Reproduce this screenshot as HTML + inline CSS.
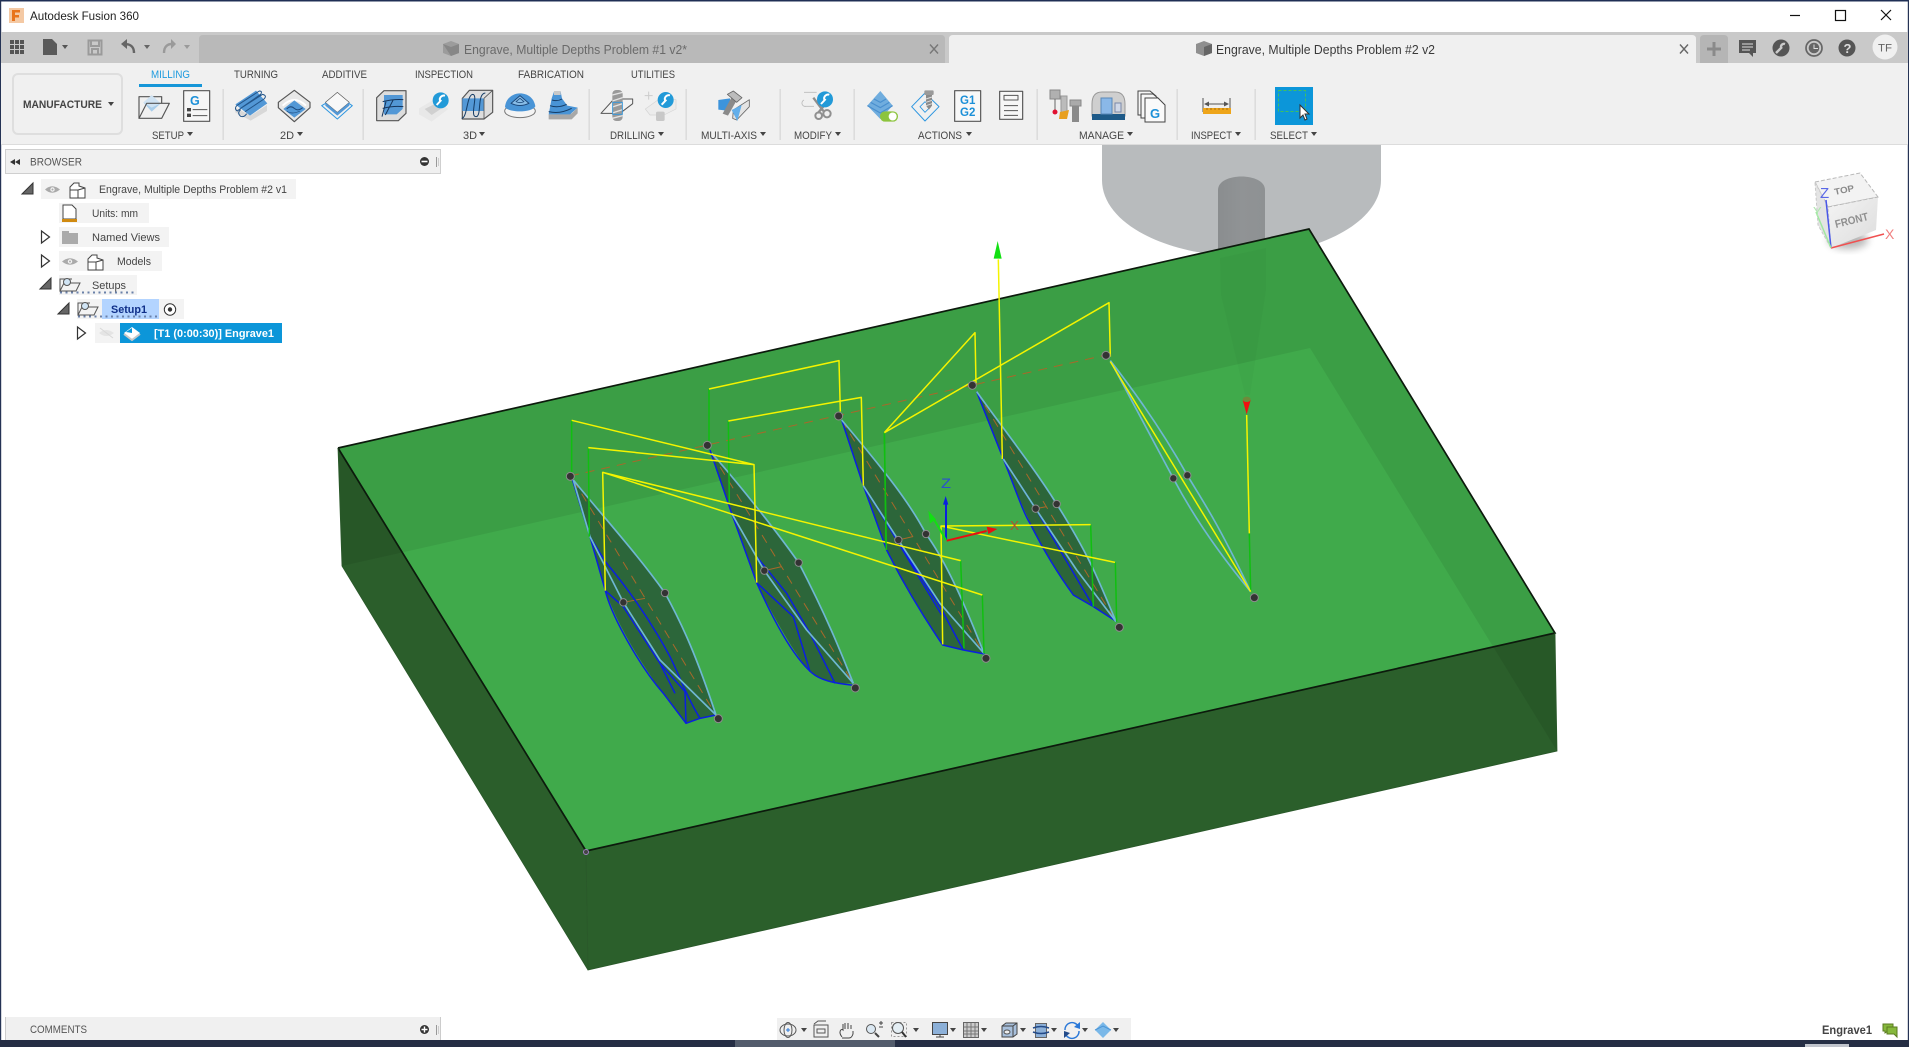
<!DOCTYPE html>
<html><head><meta charset="utf-8"><title>Autodesk Fusion 360</title>
<style>html,body{margin:0;padding:0;background:#fff;overflow:hidden;width:1909px;height:1047px}svg{display:block}text{font-family:"Liberation Sans",sans-serif}</style></head>
<body>
<svg xmlns="http://www.w3.org/2000/svg" width="1909" height="1047" viewBox="0 0 1909 1047">
<defs>
<linearGradient id="sh" x1="0" x2="1" y1="0" y2="0"><stop offset="0" stop-color="#8a8d8f"/><stop offset=".5" stop-color="#909395"/><stop offset="1" stop-color="#8e9193"/></linearGradient>
<linearGradient id="cub" x1="0" x2="1" y1="0" y2="1"><stop offset="0" stop-color="#f4f4f4"/><stop offset="1" stop-color="#dcdcdc"/></linearGradient>
<filter id="bl" x="-30%" y="-30%" width="160%" height="160%"><feGaussianBlur stdDeviation="4"/></filter>
<filter id="b1" x="-10%" y="-10%" width="120%" height="120%"><feGaussianBlur stdDeviation=".35"/></filter>
</defs>
<rect width="1909" height="1047" fill="#fff"/>

<!-- cutter -->
<path d="M1102,145V180C1102,225 1170,256 1241,256C1312,256 1381,225 1381,180V145Z" fill="#b8bbbd"/>
<path d="M1218,262V190C1218,172 1265,172 1265,190V250Z" fill="url(#sh)"/>

<!-- box -->
<polygon points="338,448 586,851 588,970 342,566" fill="#2b5e2b"/>
<polygon points="586,851 1555,633 1557,751 588,970" fill="#2b5f2b"/>
<polygon points="338,448 1309,229 1555,633 586,851" fill="#40aa4b"/>
<polygon points="338,448 1309,229 1555,633 1557,751 1310,348 342,566" fill="#000" opacity=".07"/>
<polygon points="1220,258 1266,248 1266,290 1250,395 1245,395 1221,295" fill="#000" opacity=".025"/>
<polyline points="338,448 1309,229 1555,633 586,851 338,448" fill="none" stroke="#0c1a0c" stroke-width="1.7"/>
<polyline points="586,851 588,970 1557,751 1555,633" fill="none" stroke="#2a582a" stroke-width=".8"/>
<polyline points="338,448 342,566 588,970" fill="none" stroke="#2a582a" stroke-width=".8"/>
<circle cx="586" cy="852" r="2.5" fill="#444" stroke="#a080c0"/>

<!-- dashed link -->
<line x1="570" y1="476" x2="1106" y2="355" stroke="#a8682a" stroke-width="1" stroke-dasharray="9 7"/>

<!-- blades in crop coords A -->
<g transform="translate(540 340) scale(.33333)" fill="none" stroke-linejoin="round">
 <path d="M100,420C190,530 290,640 375,759C430,860 470,950 528,1125L480,1135L438,1150C350,1040 250,900 196,752L150,590Z" fill="#2c663a"/>
 <path d="M515,340C570,400 700,560 776,668C860,830 900,930 940,1030L885,1030C860,1025 830,1010 810,995C770,950 710,850 650,728L575,520Z" fill="#2c663a"/>
 <path d="M905,240C1040,400 1110,490 1158,582C1200,640 1250,730 1332,940L1270,930L1208,915C1110,770 1060,680 1040,630L970,437Z" fill="#2c663a"/>
 <g stroke="#a8682a" stroke-width="3" stroke-dasharray="27 21">
  <path d="M100,420L528,1125M515,340L940,1030M905,240L1332,940"/>
 </g>
 <path d="M250,787L315,775M673,692L725,680M1075,600L1118,590" stroke="#a8682a" stroke-width="3"/>
 <g stroke="#0a1fe0" stroke-width="4.5">
  <path d="M97,418L150,590L196,752C215,830 300,980 370,1060L438,1150L480,1135L528,1125"/>
  <path d="M196,665C250,730 320,820 390,950C420,1010 440,1070 480,1135"/>
  <path d="M196,752L250,800L360,970L435,1055L438,1150"/>
  <path d="M150,590L196,665M360,970L405,1060"/>
  <path d="M510,330L575,520L650,728C700,840 760,950 815,998C840,1020 880,1030 942,1036"/>
  <path d="M650,650L740,760L810,880L885,1030M650,728L760,830L810,995"/>
  <path d="M905,240L970,437L1040,550L1200,800L1270,930M970,437L1040,630C1090,730 1150,830 1208,915L1270,930L1334,942M1040,550L1130,700L1208,830"/>
 </g>
 <g stroke="#6fb7d2" stroke-width="5">
  <path d="M100,420C190,530 290,640 375,759C430,860 470,950 528,1125"/>
  <path d="M100,420L150,590L250,787L360,960L528,1125"/>
  <path d="M515,340C570,400 700,560 776,668C860,830 900,930 940,1030"/>
  <path d="M575,520L673,692L800,870L940,1030"/>
  <path d="M905,240C1040,400 1110,490 1158,582C1200,640 1250,730 1332,940"/>
  <path d="M970,437L1075,600L1200,790L1332,940"/>
 </g>
 <g stroke="#10bf10" stroke-width="4.5">
  <path d="M95,240V400M145,323L148,590M507,147V310M565,243L568,490M1262,662L1272,925M1327,765L1332,940M1033,278L1039,630"/>
 </g>
 <g stroke="#f4f400" stroke-width="4.5">
  <path d="M95,241L642,374L650,728M145,323L642,374"/>
  <path d="M196,752L188,397L1262,662M188,397L1327,765"/>
  <path d="M507,147L897,62L901,215M565,243L964,172L970,437"/>
 </g>
 <g fill="#333" stroke="#8c8c8c" stroke-width="3">
  <circle cx="91" cy="409" r="12"/><circle cx="535" cy="1136" r="12"/><circle cx="375" cy="759" r="11"/><circle cx="250" cy="787" r="11"/>
  <circle cx="502" cy="316" r="12"/><circle cx="946" cy="1044" r="12"/><circle cx="776" cy="668" r="11"/><circle cx="673" cy="692" r="11"/>
  <circle cx="896" cy="228" r="12"/><circle cx="1338" cy="955" r="12"/><circle cx="1158" cy="582" r="11"/><circle cx="1075" cy="600" r="11"/>
 </g>
</g>

<!-- blades in crop coords B -->
<g transform="translate(880 230) scale(.33333)" fill="none" stroke-linejoin="round">
 <path d="M290,485C365,590 460,710 530,822C630,980 660,1060 708,1175L640,1130L580,1095C500,990 440,870 370,687Z" fill="#2c663a"/>
 <path d="M290,485L708,1175" stroke="#a8682a" stroke-width="3" stroke-dasharray="27 21"/>
 <path d="M467,836L500,830" stroke="#a8682a" stroke-width="3"/>
 <g stroke="#0a1fe0" stroke-width="4.5">
  <path d="M290,485L370,687C400,760 430,850 450,880C490,960 540,1040 580,1095L640,1130L710,1175"/>
  <path d="M370,687L467,836L640,1130"/>
 </g>
 <g stroke="#6fb7d2" stroke-width="5">
  <path d="M290,485C365,590 460,710 530,822C630,980 660,1060 708,1175"/>
  <path d="M370,687L467,836L590,1020L708,1175"/>
  <path d="M691,392C760,480 840,590 922,736C960,800 1010,870 1112,1085"/>
  <path d="M691,392L880,745C930,840 1000,950 1112,1085"/>
 </g>
 <g stroke="#10bf10" stroke-width="4.5">
  <path d="M13,608L18,940M632,884L640,1130M706,997L710,1175M1108,910L1112,1085"/>
 </g>
 <g stroke="#f4f400" stroke-width="4.5">
  <path d="M13,608L285,308L288,460M13,608L687,218L691,380"/>
  <path d="M355,88L367,687"/>
  <path d="M188,1243L183,888L632,884M183,888L705,997"/>
  <path d="M691,395L1112,1085"/>
  <path d="M1100,555L1108,910"/>
 </g>
 <polygon points="353,33 365,86 341,86" fill="#12e012"/>
 <polygon points="1088,510 1112,510 1100,553" fill="#f01010"/>
 <ellipse cx="1100" cy="508" rx="12" ry="8" fill="#6e8a3a"/>
 <path d="M198,930V820" stroke="#0a1fe0" stroke-width="6"/>
 <polygon points="197,798 205,824 189,824" fill="#0a1fe0"/>
 <path d="M198,930L160,865" stroke="#12e012" stroke-width="6"/>
 <polygon points="145,842 168,868 150,880" fill="#12e012"/>
 <path d="M200,932L320,903" stroke="#e81010" stroke-width="6"/>
 <polygon points="352,897 320,890 325,912" fill="#e81010"/>
 <g fill="#333" stroke="#8c8c8c" stroke-width="3">
  <circle cx="277" cy="466" r="12"/><circle cx="718" cy="1192" r="12"/><circle cx="530" cy="822" r="11"/><circle cx="467" cy="836" r="11"/>
  <circle cx="678" cy="376" r="12"/><circle cx="1123" cy="1103" r="12"/><circle cx="880" cy="745" r="11"/><circle cx="922" cy="736" r="11"/>
 </g>
</g>
<text x="941" y="488" font-size="14" fill="#2b4fd0" textLength="10" lengthAdjust="spacingAndGlyphs">Z</text>
<text x="1010" y="530" font-size="13" fill="#b05030" textLength="9" lengthAdjust="spacingAndGlyphs">X</text>

<!-- chrome: window edges -->
<rect x="0" y="0" width="1909" height="1.5" fill="#1f2f55"/>
<rect x="0" y="0" width="1.2" height="1047" fill="#253355"/>
<rect x="1907.8" y="0" width="1.2" height="1047" fill="#253355"/>

<!-- title bar -->
<rect x="9" y="8" width="15" height="15" fill="#f4c9a4"/>
<path d="M12,10H20V12.5H15V15H19V17.5H15V21H12Z" fill="#e8741c"/>
<text x="30" y="20" font-size="12" fill="#222" textLength="109" lengthAdjust="spacingAndGlyphs">Autodesk Fusion 360</text>
<path d="M1790,15.5H1800" stroke="#111" stroke-width="1.2"/>
<rect x="1835.5" y="10.5" width="10" height="10" fill="none" stroke="#111" stroke-width="1.2"/>
<path d="M1881,10L1891,20M1891,10L1881,20" stroke="#111" stroke-width="1.2"/>

<!-- tab row -->
<rect x="1" y="32" width="1907" height="31" fill="#c9c9c9"/>
<path d="M199,63V39Q199,35 203,35H941Q945,35 945,39V63Z" fill="#b9b9b9"/>
<path d="M949,63V39Q949,35 953,35H1692Q1696,35 1696,39V63Z" fill="#f0f0f0"/>
<path d="M1700,63V39Q1700,35 1704,35H1724Q1728,35 1728,39V63Z" fill="#b5b5b5"/>
<path d="M1714,42V56M1707,49H1721" stroke="#8a8a8a" stroke-width="3"/>
<path d="M10,40h4v4h-4zM15,40h4v4h-4zM20,40h4v4h-4zM10,45h4v4h-4zM15,45h4v4h-4zM20,45h4v4h-4zM10,50h4v4h-4zM15,50h4v4h-4zM20,50h4v4h-4z" fill="#555"/>
<path d="M43,39H52L57,44V55H43Z" fill="#5a5a5a"/>
<polygon points="62,45 68,45 65,49" fill="#555"/>
<path d="M88.5,40.5H101.5V54.5H88.5ZM91,40.5V46H99V40.5M92,54V49H98V54" fill="none" stroke="#9a9a9a" stroke-width="2"/>
<path d="M134,53C134,46 130,44 124,44" fill="none" stroke="#666" stroke-width="2.4"/><polygon points="121,44 127,39 127,49" fill="#666"/>
<polygon points="144,45 150,45 147,49" fill="#666"/>
<path d="M164,53C164,46 168,44 172,44" fill="none" stroke="#9a9a9a" stroke-width="2.4"/><polygon points="176,44 171,39 171,49" fill="#9a9a9a"/>
<polygon points="184,45 190,45 187,49" fill="#9a9a9a"/>
<path d="M443,44L451,41L459,44V53L451,56L443,53Z" fill="#9c9c9c"/>
<path d="M443,44L451,47L459,44V53L451,56Z" fill="#878787"/>
<text x="464" y="54" font-size="12.5" fill="#6a6a6a" textLength="223" lengthAdjust="spacingAndGlyphs">Engrave, Multiple Depths Problem #1 v2*</text>
<path d="M930,44.5L938,53.5M938,44.5L930,53.5" stroke="#777" stroke-width="1.4"/>
<path d="M1196,44L1204,41L1212,44V53L1204,56L1196,53Z" fill="#8f8f8f"/>
<path d="M1204,47L1212,44V53L1204,56Z" fill="#666"/>
<text x="1216" y="54" font-size="12.5" fill="#3a3a3a" textLength="219" lengthAdjust="spacingAndGlyphs">Engrave, Multiple Depths Problem #2 v2</text>
<path d="M1680,44.5L1688,53.5M1688,44.5L1680,53.5" stroke="#666" stroke-width="1.4"/>
<path d="M1739,40H1756V53H1753V57L1749,53H1739Z" fill="#555"/><path d="M1742,44H1753M1742,47H1753M1742,50H1750" stroke="#ddd"/>
<circle cx="1781" cy="48" r="8.5" fill="#555"/><path d="M1776,53L1782,47M1785,44A3,3 0 0 0 1781,47" stroke="#ccc" stroke-width="2.4" fill="none"/>
<circle cx="1814" cy="48" r="8" fill="none" stroke="#666" stroke-width="1.7"/><circle cx="1814" cy="48" r="5.3" fill="#666"/><path d="M1814,44.5V48.5H1818" stroke="#ddd" fill="none"/>
<circle cx="1847" cy="48" r="8.5" fill="#555"/><text x="1843.5" y="53" font-size="13" font-weight="bold" fill="#ddd">?</text>
<circle cx="1885" cy="47" r="12.5" fill="#f0f0f0"/><text x="1878" y="51.5" font-size="11" fill="#666" textLength="14" lengthAdjust="spacingAndGlyphs">TF</text>

<!-- ribbon -->
<rect x="1" y="63" width="1907" height="81" fill="#f0f0f0"/>
<rect x="1" y="144" width="1907" height="1" fill="#dcdcdc"/>
<rect x="13" y="74" width="109" height="60" rx="5" fill="#f0f0f0" stroke="#dedede" stroke-width="2"/>
<text x="23" y="108" font-size="11" font-weight="bold" fill="#444" textLength="79" lengthAdjust="spacingAndGlyphs">MANUFACTURE</text>
<polygon points="108,102 114,102 111,106" fill="#444"/>
<g font-size="11" fill="#444">
<text x="151" y="78" fill="#1c9ade" textLength="39" lengthAdjust="spacingAndGlyphs">MILLING</text>
<text x="234" y="78" textLength="44" lengthAdjust="spacingAndGlyphs">TURNING</text>
<text x="322" y="78" textLength="45" lengthAdjust="spacingAndGlyphs">ADDITIVE</text>
<text x="415" y="78" textLength="58" lengthAdjust="spacingAndGlyphs">INSPECTION</text>
<text x="518" y="78" textLength="66" lengthAdjust="spacingAndGlyphs">FABRICATION</text>
<text x="631" y="78" textLength="44" lengthAdjust="spacingAndGlyphs">UTILITIES</text>
<text x="152" y="139" textLength="32" lengthAdjust="spacingAndGlyphs">SETUP</text>
<text x="280" y="139" textLength="14" lengthAdjust="spacingAndGlyphs">2D</text>
<text x="463" y="139" textLength="14" lengthAdjust="spacingAndGlyphs">3D</text>
<text x="610" y="139" textLength="45" lengthAdjust="spacingAndGlyphs">DRILLING</text>
<text x="701" y="139" textLength="56" lengthAdjust="spacingAndGlyphs">MULTI-AXIS</text>
<text x="794" y="139" textLength="38" lengthAdjust="spacingAndGlyphs">MODIFY</text>
<text x="918" y="139" textLength="44" lengthAdjust="spacingAndGlyphs">ACTIONS</text>
<text x="1079" y="139" textLength="45" lengthAdjust="spacingAndGlyphs">MANAGE</text>
<text x="1191" y="139" textLength="41" lengthAdjust="spacingAndGlyphs">INSPECT</text>
<text x="1270" y="139" textLength="38" lengthAdjust="spacingAndGlyphs">SELECT</text>
</g>
<rect x="139" y="84" width="63" height="3" fill="#1696d8"/>
<g fill="#444">
<polygon points="187,132 193,132 190,136"/><polygon points="297,132 303,132 300,136"/><polygon points="479,132 485,132 482,136"/><polygon points="658,132 664,132 661,136"/><polygon points="760,132 766,132 763,136"/><polygon points="835,132 841,132 838,136"/><polygon points="966,132 972,132 969,136"/><polygon points="1127,132 1133,132 1130,136"/><polygon points="1235,132 1241,132 1238,136"/><polygon points="1311,132 1317,132 1314,136"/>
</g>
<g fill="#d8d8d8"><rect x="222.500" y="89" width="1.300" height="51"/><rect x="362.500" y="89" width="1.300" height="51"/><rect x="588.500" y="89" width="1.300" height="51"/><rect x="685.500" y="89" width="1.300" height="51"/><rect x="779.500" y="89" width="1.300" height="51"/><rect x="853.500" y="89" width="1.300" height="51"/><rect x="1036.500" y="89" width="1.300" height="51"/><rect x="1176.500" y="89" width="1.300" height="51"/><rect x="1254.500" y="89" width="1.300" height="51"/></g>

<!-- ribbon icons, part 1 -->
<g transform="translate(130 85) scale(.33333)" stroke-linejoin="round" filter="url(#b1)">
 <!-- folder -->
 <path d="M27,100V35H65M65,35H95V55" fill="none" stroke="#555" stroke-width="3.5"/>
 <polygon points="40,52 65,30 92,55 65,80" fill="#cfe2f2"/>
 <polygon points="40,52 65,68 92,55 65,80" fill="#a9cdea"/>
 <path d="M27,100L50,55H118L95,100Z" fill="none" stroke="#555" stroke-width="3.5"/>
 <!-- G doc -->
 <rect x="161" y="17" width="78" height="92" fill="#f6f6f6" stroke="#555" stroke-width="3.5"/>
 <path d="M171,69h12v10h-12zM171,86h12v10h-12z" fill="#444"/><path d="M188,74H232M188,92H232" stroke="#555" stroke-width="3"/>
 <!-- contour -->
 <polygon points="316,68 362,92 411,60 411,78 362,107 316,82" fill="#d8d8d8"/>
 <polygon points="316,58 378,17 412,55 360,92" fill="#5298d6"/>
 <path d="M320,62L388,18Q398,18 392,28L332,70M332,70L398,28Q412,32 402,42L345,80M320,62Q312,72 322,78L332,70M332,74Q320,84 332,94Q342,98 350,86" fill="none" stroke="#23558a" stroke-width="3"/>
 <!-- pocket -->
 <polygon points="445,52 493,16 540,52 540,68 493,110 445,68" fill="#e8e8e8" stroke="#555" stroke-width="3.5"/>
 <path d="M458,62Q493,28 528,62" fill="none" stroke="#fff" stroke-width="6"/>
 <polygon points="460,72 493,46 527,72 493,98" fill="#5298d6"/>
 <path d="M470,72Q482,60 493,70T518,68" fill="none" stroke="#1d4a7c" stroke-width="3"/>
 <path d="M470,78Q485,90 510,78" fill="none" stroke="#1d4a7c" stroke-width="2"/>
 <!-- 2D chamfer -->
 <polygon points="575,62 622,102 667,62 652,52 622,78 592,52" fill="none" stroke="#2d96e0" stroke-width="3"/>
 <polygon points="586,52 622,22 658,52 622,82" fill="#f8f8f8" stroke="#555" stroke-width="2"/>
 <polygon points="586,52 622,82 658,52 658,62 622,92 586,62" fill="#5298d6"/>
 <!-- 3D 1 -->
 <polygon points="740,38 762,17 828,17 828,85 805,107 740,107" fill="#ddd" stroke="#555" stroke-width="3.5"/>
 <polygon points="762,30 818,30 818,72 800,88 762,88" fill="#5298d6"/>
 <path d="M758,50Q790,42 820,44M758,70Q790,62 820,65M768,50L756,95M790,44L766,90" fill="none" stroke="#16365c" stroke-width="3"/>
 <!-- 3D 2 -->
 <polygon points="867,70 915,42 955,72 905,110 867,88" fill="#e8e8e8"/>
 <polygon points="884,72 912,58 932,72 905,90" fill="#d0d0d0"/>
 <circle cx="932" cy="46" r="24" fill="#229ad8"/>
 <path d="M920,60L934,45M945,32A12,12 0 0 0 930,47" stroke="#fff" stroke-width="6" fill="none"/>
 <!-- 3D 3 -->
 <polygon points="997,40 1018,16 1088,16 1088,82 1062,102 997,102" fill="#ddd" stroke="#555" stroke-width="3.5"/>
 <polygon points="997,40 1062,40 1062,78 997,78" fill="#5298d6"/>
 <path d="M1062,40L1088,16M1062,40V102" stroke="#555" stroke-width="2.500"/>
 <path d="M995,100C1012,100 1010,30 1028,28C1046,28 1018,95 1038,95C1056,95 1040,26 1066,24" fill="none" stroke="#133c66" stroke-width="3"/>
 <!-- 3D 4 -->
 <ellipse cx="1170" cy="78" rx="46" ry="20" fill="#f4f4f4" stroke="#777" stroke-width="3"/>
 <path d="M1125,66C1128,38 1150,25 1170,25C1192,25 1212,38 1216,64C1205,84 1135,84 1125,66Z" fill="#4a94d6"/>
 <path d="M1143,55L1170,32L1197,55Q1170,68 1143,55Z" fill="#88bde8" stroke="#1d4a7c" stroke-width="3"/>
 <path d="M1158,50L1170,40L1182,50Q1170,56 1158,50Z" fill="none" stroke="#1d4a7c" stroke-width="2.500"/>
 <!-- 3D 5 -->
 <polygon points="1256,88 1256,103 1325,103 1343,85 1343,68 1325,85" fill="#a8a8a8"/>
 <path d="M1256,88L1265,40L1272,20H1292L1296,40L1312,62L1343,68L1320,88Z" fill="#4a94d6"/>
 <rect x="1272" y="18" width="20" height="12" fill="#c8c8c8"/>
 <path d="M1266,45Q1282,50 1296,42M1260,62Q1285,70 1310,58M1256,80Q1290,88 1325,70" fill="none" stroke="#133c66" stroke-width="3"/>
</g>

<!-- ribbon icons, part 2 -->
<g transform="translate(590 85) scale(.33333)" stroke-linejoin="round" filter="url(#b1)">
 <!-- Drilling -->
 <polygon points="33,85 72,42 128,42 128,56 90,85" fill="#f2f2f2" stroke="#555" stroke-width="3"/>
 <rect x="67" y="15" width="31" height="93" rx="12" fill="#9a9a9a"/>
 <path d="M67,30L98,22M67,48L98,38M67,66L98,56M67,84L98,74M67,100L98,92" stroke="#e4e4e4" stroke-width="4"/>
 <rect x="68" y="52" width="29" height="36" fill="none" stroke="#2d96e0" stroke-width="2.500"/>
 <!-- Drilling 2 -->
 <path d="M176,20V44M164,32H188" stroke="#ccc" stroke-width="3"/>
 <polygon points="166,72 205,44 258,44 258,72 222,90 180,90" fill="#ececec" stroke="#d4d4d4" stroke-width="2"/>
 <rect x="198" y="80" width="26" height="28" rx="5" fill="#c8c8c8"/>
 <circle cx="227" cy="45" r="24" fill="#229ad8"/>
 <path d="M215,59L229,44M240,31A12,12 0 0 0 225,46" stroke="#fff" stroke-width="6" fill="none"/>
 <!-- Multi axis -->
 <polygon points="430,75 478,44 478,65 440,105 428,100" fill="#e4e4e4" stroke="#666" stroke-width="2.500"/>
 <polygon points="385,45 420,40 420,78 385,74" fill="#3c94dc"/>
 <polygon points="425,75 455,60 442,108" fill="#62aeea"/>
 <polygon points="398,86 424,38 440,46 414,92" fill="#8a8a8a"/>
 <polygon points="412,28 430,18 456,38 440,52" fill="#bcbcbc" stroke="#666" stroke-width="2.500"/>
 <!-- Modify -->
 <path d="M642,22H680M642,64H672M642,45A10,10 0 0 0 648,64" fill="none" stroke="#bbb" stroke-width="2.500"/>
 <path d="M670,38L700,78M712,50L684,84" stroke="#8e8e8e" stroke-width="7"/>
 <circle cx="686" cy="92" r="10" fill="none" stroke="#909090" stroke-width="6"/><circle cx="711" cy="86" r="11" fill="none" stroke="#909090" stroke-width="6"/>
 <circle cx="705" cy="43" r="24" fill="#229ad8"/>
 <path d="M693,57L707,42M718,29A12,12 0 0 0 703,44" stroke="#fff" stroke-width="6" fill="none"/>
 <!-- stack -->
 <polygon points="832,62 871,18 908,62 871,102" fill="#6fadde"/>
 <path d="M832,62L871,84L908,62M842,52L871,68L898,52M852,42L871,52L888,42" fill="none" stroke="#4a8fce" stroke-width="3.500"/>
 <rect x="870" y="79" width="54" height="31" rx="15" fill="#8cc43c"/><circle cx="908" cy="94.500" r="12" fill="#fff"/>
 <!-- diamond bit -->
 <polygon points="965,65 1005,24 1047,65 1005,108" fill="none" stroke="#2d96e0" stroke-width="3"/>
 <polygon points="990,65 1005,50 1022,65 1005,82" fill="none" stroke="#2d96e0" stroke-width="2.500"/>
 <rect x="1003" y="16" width="28" height="14" rx="3" fill="#9a9a9a"/>
 <polygon points="1008,30 1026,30 1026,62 1017,74 1008,62" fill="#8a8a8a"/>
 <path d="M1008,42L1026,36M1008,52L1026,46M1008,62L1026,56" stroke="#ddd" stroke-width="3"/>
 <!-- G1 G2 -->
 <rect x="1094" y="17" width="78" height="92" fill="#f8f8f8" stroke="#555" stroke-width="3.500"/>
 <!-- list -->
 <rect x="1229" y="19" width="69" height="84" fill="#f6f6f6" stroke="#555" stroke-width="3.500"/>
 <path d="M1242,31H1284V45H1242ZM1242,62H1284M1242,77H1284M1242,91H1284" fill="none" stroke="#555" stroke-width="3"/>
</g>
<text x="960" y="104" font-size="11.500" font-weight="bold" fill="#1c90d8" font-family="Liberation Mono">G1</text>
<text x="960" y="116" font-size="11.500" font-weight="bold" fill="#1c90d8" font-family="Liberation Mono">G2</text>
<text x="190" y="105" font-size="12.500" font-weight="bold" fill="#1c90d8">G</text>

<!-- Manage -->
<rect x="1050" y="90" width="10" height="9" fill="#b0b0b0" stroke="#888"/><path d="M1055,99V110" stroke="#666"/><circle cx="1055" cy="112" r="2.500" fill="#e01030"/>
<rect x="1061" y="96" width="6" height="20" fill="#bbb" stroke="#999"/><path d="M1060,112L1069,110L1067,119H1059Z" fill="#e8a020"/>
<rect x="1070" y="100" width="11" height="6" fill="#aaa" stroke="#888"/><rect x="1072" y="106" width="7" height="16" fill="#8a8a8a"/>
<path d="M1092,104Q1092,92 1102,92H1115Q1125,92 1125,104V116H1092Z" fill="#cfcfcf" stroke="#999"/>
<rect x="1092" y="114" width="33" height="6" fill="#1e5a88"/>
<rect x="1101" y="98" width="11" height="16" fill="#8ab8e8" stroke="#5a88b8"/><rect x="1115" y="103" width="6" height="9" fill="#d0d8e8" stroke="#7a88a8"/>
<path d="M1138,91H1150L1156,96V115H1138Z" fill="#f6f6f6" stroke="#444"/>
<path d="M1141,94H1153L1159,99V118H1141Z" fill="#f6f6f6" stroke="#444"/>
<path d="M1145,98H1158L1165,105V122H1145Z" fill="#fafafa" stroke="#444"/>
<text x="1150" y="118" font-size="13" font-weight="bold" fill="#1c90d8">G</text>

<!-- Inspect -->
<path d="M1203,98V112M1230,98V112M1205,104H1228" stroke="#555"/><polygon points="1204,104 1209,101.500 1209,106.500" fill="#555"/><polygon points="1229,104 1224,101.500 1224,106.500" fill="#555"/>
<rect x="1203" y="108" width="28" height="6" fill="#eea51a"/><path d="M1207,108v2M1211,108v2M1215,108v2M1219,108v2M1223,108v2M1227,108v2" stroke="#a87010"/>

<!-- Select -->
<rect x="1275" y="87" width="38" height="38" fill="#0c96d9"/>
<rect x="1278.500" y="90.500" width="27" height="21" fill="none" stroke="#40c060" stroke-dasharray="3 2"/>
<path d="M1300,105V118L1303,115L1305,120L1307,119L1305,114H1309Z" fill="#fff" stroke="#333"/>

<!-- Browser -->
<rect x="5.500" y="149.500" width="435" height="24" fill="#f0f0f0" stroke="#cfcfcf"/>
<polygon points="10,162 15,159 15,165" fill="#333"/><polygon points="15,162 20,159 20,165" fill="#333"/>
<text x="30" y="165.500" font-size="11" fill="#555" textLength="52" lengthAdjust="spacingAndGlyphs">BROWSER</text>
<circle cx="424.500" cy="161.500" r="4.500" fill="#333"/><rect x="421.500" y="160.700" width="6" height="1.600" fill="#fff"/>
<path d="M436.500,157V167" stroke="#999"/><path d="M438.500,158V166" stroke="#ccc"/>

<g fill="#f3f3f3">
<rect x="41" y="179" width="255" height="20"/><rect x="59" y="203" width="90" height="20"/><rect x="59" y="227" width="110" height="20"/><rect x="59" y="251" width="103" height="20"/><rect x="59" y="275" width="78" height="20"/><rect x="77" y="299" width="107" height="20"/><rect x="95" y="323" width="25" height="20"/>
</g>
<rect x="102" y="299" width="57" height="20" fill="#b3d4ff"/>
<rect x="120" y="323" width="162" height="20" fill="#0c96d9"/>
<g font-size="11" fill="#444">
<text x="99" y="193" textLength="188" lengthAdjust="spacingAndGlyphs">Engrave, Multiple Depths Problem #2 v1</text>
<text x="92" y="217" textLength="46" lengthAdjust="spacingAndGlyphs">Units: mm</text>
<text x="92" y="241" textLength="68" lengthAdjust="spacingAndGlyphs">Named Views</text>
<text x="117" y="265" textLength="34" lengthAdjust="spacingAndGlyphs">Models</text>
<text x="92" y="289" textLength="34" lengthAdjust="spacingAndGlyphs">Setups</text>
</g>
<text x="111" y="313" font-size="11" font-weight="bold" fill="#10308a" textLength="36" lengthAdjust="spacingAndGlyphs">Setup1</text>
<text x="154" y="337" font-size="11" font-weight="bold" fill="#fff" textLength="120" lengthAdjust="spacingAndGlyphs">[T1 (0:00:30)] Engrave1</text>
<!-- expanders -->
<polygon points="22,194 33,183 33,194" fill="#666" stroke="#333"/>
<polygon points="40,289 51,278 51,289" fill="#666" stroke="#333"/>
<polygon points="58,314 69,303 69,314" fill="#666" stroke="#333"/>
<polygon points="41.500,231 49.500,237 41.500,243" fill="#fff" stroke="#333" stroke-width="1.2"/>
<polygon points="41.500,255 49.500,261 41.500,267" fill="#fff" stroke="#333" stroke-width="1.2"/>
<polygon points="77.500,327 85.500,333 77.500,339" fill="#fff" stroke="#333" stroke-width="1.2"/>
<!-- eyes -->
<path d="M45,189.500Q52,183 60,189.500Q52,196 45,189.500Z" fill="#aaa"/><circle cx="52.500" cy="189.500" r="2.200" fill="#f3f3f3"/><circle cx="52.500" cy="189.500" r="1" fill="#aaa"/>
<path d="M62,261.500Q70,255 78,261.500Q70,268 62,261.500Z" fill="#aaa"/><circle cx="70" cy="261.500" r="2.200" fill="#f3f3f3"/><circle cx="70" cy="261.500" r="1" fill="#aaa"/>
<path d="M99,333Q106,327 114,333Q106,339 99,333Z" fill="#e4e4e4"/><path d="M100,328L113,338" stroke="#d8d8d8"/>
<!-- component cubes -->
<path d="M70,187L74,183H79V186L85,188V198H70ZM70,190H78V198M78,190L85,188" fill="#fff" stroke="#444"/>
<path d="M88,259L92,255H97V258L103,260V270H88ZM88,262H96V270M96,262L103,260" fill="#fff" stroke="#444"/>
<!-- units doc -->
<path d="M63,205H72L76,209V219H63Z" fill="#fff" stroke="#444"/><rect x="62" y="219" width="15" height="3" fill="#d08a10"/>
<!-- folder -->
<path d="M62,231H69V233H78V244H62Z" fill="#aaa"/>
<!-- setup icons -->
<path d="M60,291L64,283H80L76,291ZM60,291V279H72" fill="none" stroke="#555"/><circle cx="67" cy="282" r="3.500" fill="#d0e4f4" stroke="#555"/>
<path d="M78,315L82,307H98L94,315ZM78,315V303H90" fill="none" stroke="#555"/><circle cx="85" cy="306" r="3.500" fill="#d0e4f4" stroke="#555"/>
<path d="M60,292.500H135" stroke="#6a80a8" stroke-width="2" stroke-dasharray="2 3.500"/>
<path d="M78,316.500H158" stroke="#6a80a8" stroke-width="2" stroke-dasharray="2 3.500"/>
<circle cx="170" cy="309.500" r="5.700" fill="#fff" stroke="#333"/><circle cx="170" cy="309.500" r="2.200" fill="#333"/>
<!-- op icon -->
<path d="M124,333L132,327L140,333L132,340Z" fill="#fff"/><path d="M126,332L132,328L132,333Z" fill="#0c96d9"/><path d="M124,334L132,340L140,334" fill="none" stroke="#c8c8c8" stroke-width="2"/>

<!-- viewcube -->
<g>
<ellipse cx="1848" cy="240" rx="20" ry="9" fill="#000" opacity=".28" filter="url(#bl)"/>
<polygon points="1815,182 1860,173 1878,197 1828,207" fill="#f3f3f3" stroke="#b8b8b8" stroke-dasharray="4 2"/>
<polygon points="1828,207 1878,197 1876,230 1831,248" fill="url(#cub)"/>
<polygon points="1815,182 1828,207 1831,248 1818,225" fill="#e4e4e4" stroke="#c8c8c8" stroke-dasharray="3 2"/>
<path d="M1828,207L1878,197" stroke="#b8b8b8" stroke-dasharray="4 2"/>
<text x="1835" y="195" font-size="9" font-weight="bold" fill="#8a8a8a" textLength="20" lengthAdjust="spacingAndGlyphs" transform="rotate(-12 1835 195)">TOP</text>
<text x="1836" y="228" font-size="11" font-weight="bold" fill="#8f8f8f" textLength="34" lengthAdjust="spacingAndGlyphs" transform="rotate(-14 1836 228)">FRONT</text>
<path d="M1831,248L1826,200" stroke="#4a58e8" stroke-width="1.5"/>
<path d="M1831,248L1884,234" stroke="#f05050" stroke-width="1.5"/>
<path d="M1831,248L1816,212" stroke="#a0e8a0" stroke-width="1.5"/>
<text x="1820" y="198" font-size="15" fill="#5a68e8">Z</text>
<text x="1885" y="239" font-size="14" fill="#f08080">X</text>
<text x="1813" y="216" font-size="13" fill="#b0e8b0">Y</text>
</g>

<!-- comments -->
<rect x="5" y="1017" width="436" height="23" fill="#f0f0f0"/>
<path d="M5.500,1017V1040M440.500,1017V1040" stroke="#ccc"/>
<text x="30" y="1033" font-size="11" fill="#555" textLength="57" lengthAdjust="spacingAndGlyphs">COMMENTS</text>
<circle cx="424.500" cy="1029.500" r="4.500" fill="#333"/><path d="M421.500,1029.500H427.500M424.500,1026.500V1032.500" stroke="#fff" stroke-width="1.400"/>
<path d="M436.500,1025V1035" stroke="#999"/><path d="M438.500,1026V1034" stroke="#ccc"/>

<!-- nav bar -->
<rect x="777" y="1018" width="354" height="22" fill="#f0f0f0"/>
<ellipse cx="788" cy="1030" rx="8" ry="6" fill="none" stroke="#555"/><ellipse cx="788" cy="1030" rx="4" ry="7.500" fill="none" stroke="#555"/><path d="M786,1030H790M788,1028V1032" stroke="#2a78d8"/>
<polygon points="801,1028 807,1028 804,1032" fill="#444"/>
<path d="M814,1025H828V1037H814ZM817,1029H825V1033H817ZM814,1024L818,1021H826" fill="none" stroke="#555"/>
<path d="M842,1037C838,1032 841,1028 843,1030V1024M845,1029V1023M848,1029V1023M851,1029V1025M853,1031V1034C852,1037 851,1038 849,1038H842" fill="none" stroke="#444"/>
<circle cx="871" cy="1029" r="4.500" fill="#dbe8f2" stroke="#555"/><path d="M875,1033L879,1037" stroke="#444" stroke-width="2"/><path d="M879,1023H883M881,1021V1025M879,1027H883" stroke="#444"/>
<rect x="891.500" y="1022.500" width="15" height="14" fill="none" stroke="#999" stroke-dasharray="2 2"/><circle cx="898" cy="1028" r="5.500" fill="#e4eef4" stroke="#555"/><path d="M902,1032L906,1037" stroke="#333" stroke-width="2"/>
<polygon points="913,1028 919,1028 916,1032" fill="#444"/>
<rect x="932.500" y="1022.500" width="15" height="12" fill="#8cb0d8" stroke="#444"/><path d="M936,1037H944M940,1035V1037" stroke="#444"/>
<polygon points="950,1028 956,1028 953,1032" fill="#444"/>
<rect x="963.500" y="1022.500" width="15" height="15" fill="#ccc" stroke="#666"/><path d="M967,1023V1037M971,1023V1037M975,1023V1037M964,1027H978M964,1031H978M964,1034H978" stroke="#777"/>
<polygon points="981,1028 987,1028 984,1032" fill="#444"/>
<path d="M1002,1026L1006,1023H1017V1034L1013,1037H1002Z" fill="#a8c0dc" stroke="#444"/><path d="M1002,1026H1013V1037M1013,1026L1017,1023" fill="none" stroke="#444"/><ellipse cx="1007" cy="1032" rx="3" ry="2" fill="#eee" stroke="#555"/>
<polygon points="1020,1028 1026,1028 1023,1032" fill="#444"/>
<rect x="1035.500" y="1023.500" width="11" height="14" fill="#8cb0d8" stroke="#666"/><path d="M1033,1028Q1041,1025 1049,1028M1033,1032Q1041,1035 1049,1032" fill="none" stroke="#234a88" stroke-width="1.500"/>
<polygon points="1051,1028 1057,1028 1054,1032" fill="#444"/>
<path d="M1065,1030A7,7 0 0 1 1078,1026M1079,1031A7,7 0 0 1 1066,1035" fill="none" stroke="#2a78d8" stroke-width="1.400"/><polygon points="1080,1022 1080,1029 1074,1027" fill="#2a78d8"/><polygon points="1064,1038 1064,1031 1070,1033" fill="#234a88"/>
<polygon points="1082,1028 1088,1028 1085,1032" fill="#444"/>
<polygon points="1095,1030 1103,1022 1111,1030 1103,1038" fill="#7ab8e8"/><path d="M1095,1030L1103,1026L1111,1030" stroke="#4a94d6" fill="none"/>
<polygon points="1113,1028 1119,1028 1116,1032" fill="#444"/>

<!-- right status -->
<text x="1822" y="1034" font-size="11.500" font-weight="bold" fill="#444" textLength="50" lengthAdjust="spacingAndGlyphs">Engrave1</text>
<path d="M1883,1024H1893V1031H1888L1885,1033V1031H1883Z" fill="#86b83c" stroke="#5a7a20"/>
<path d="M1887,1027H1897V1035V1037L1894,1034H1887Z" fill="#86b83c" stroke="#5a7a20"/>

<!-- taskbar -->
<rect x="0" y="1040" width="1909" height="7" fill="#252e44"/>
<rect x="735" y="1040" width="160" height="7" fill="#535c6c"/>
<rect x="1805" y="1044" width="44" height="3" fill="#c0c4cc"/>
</svg>
</body></html>
